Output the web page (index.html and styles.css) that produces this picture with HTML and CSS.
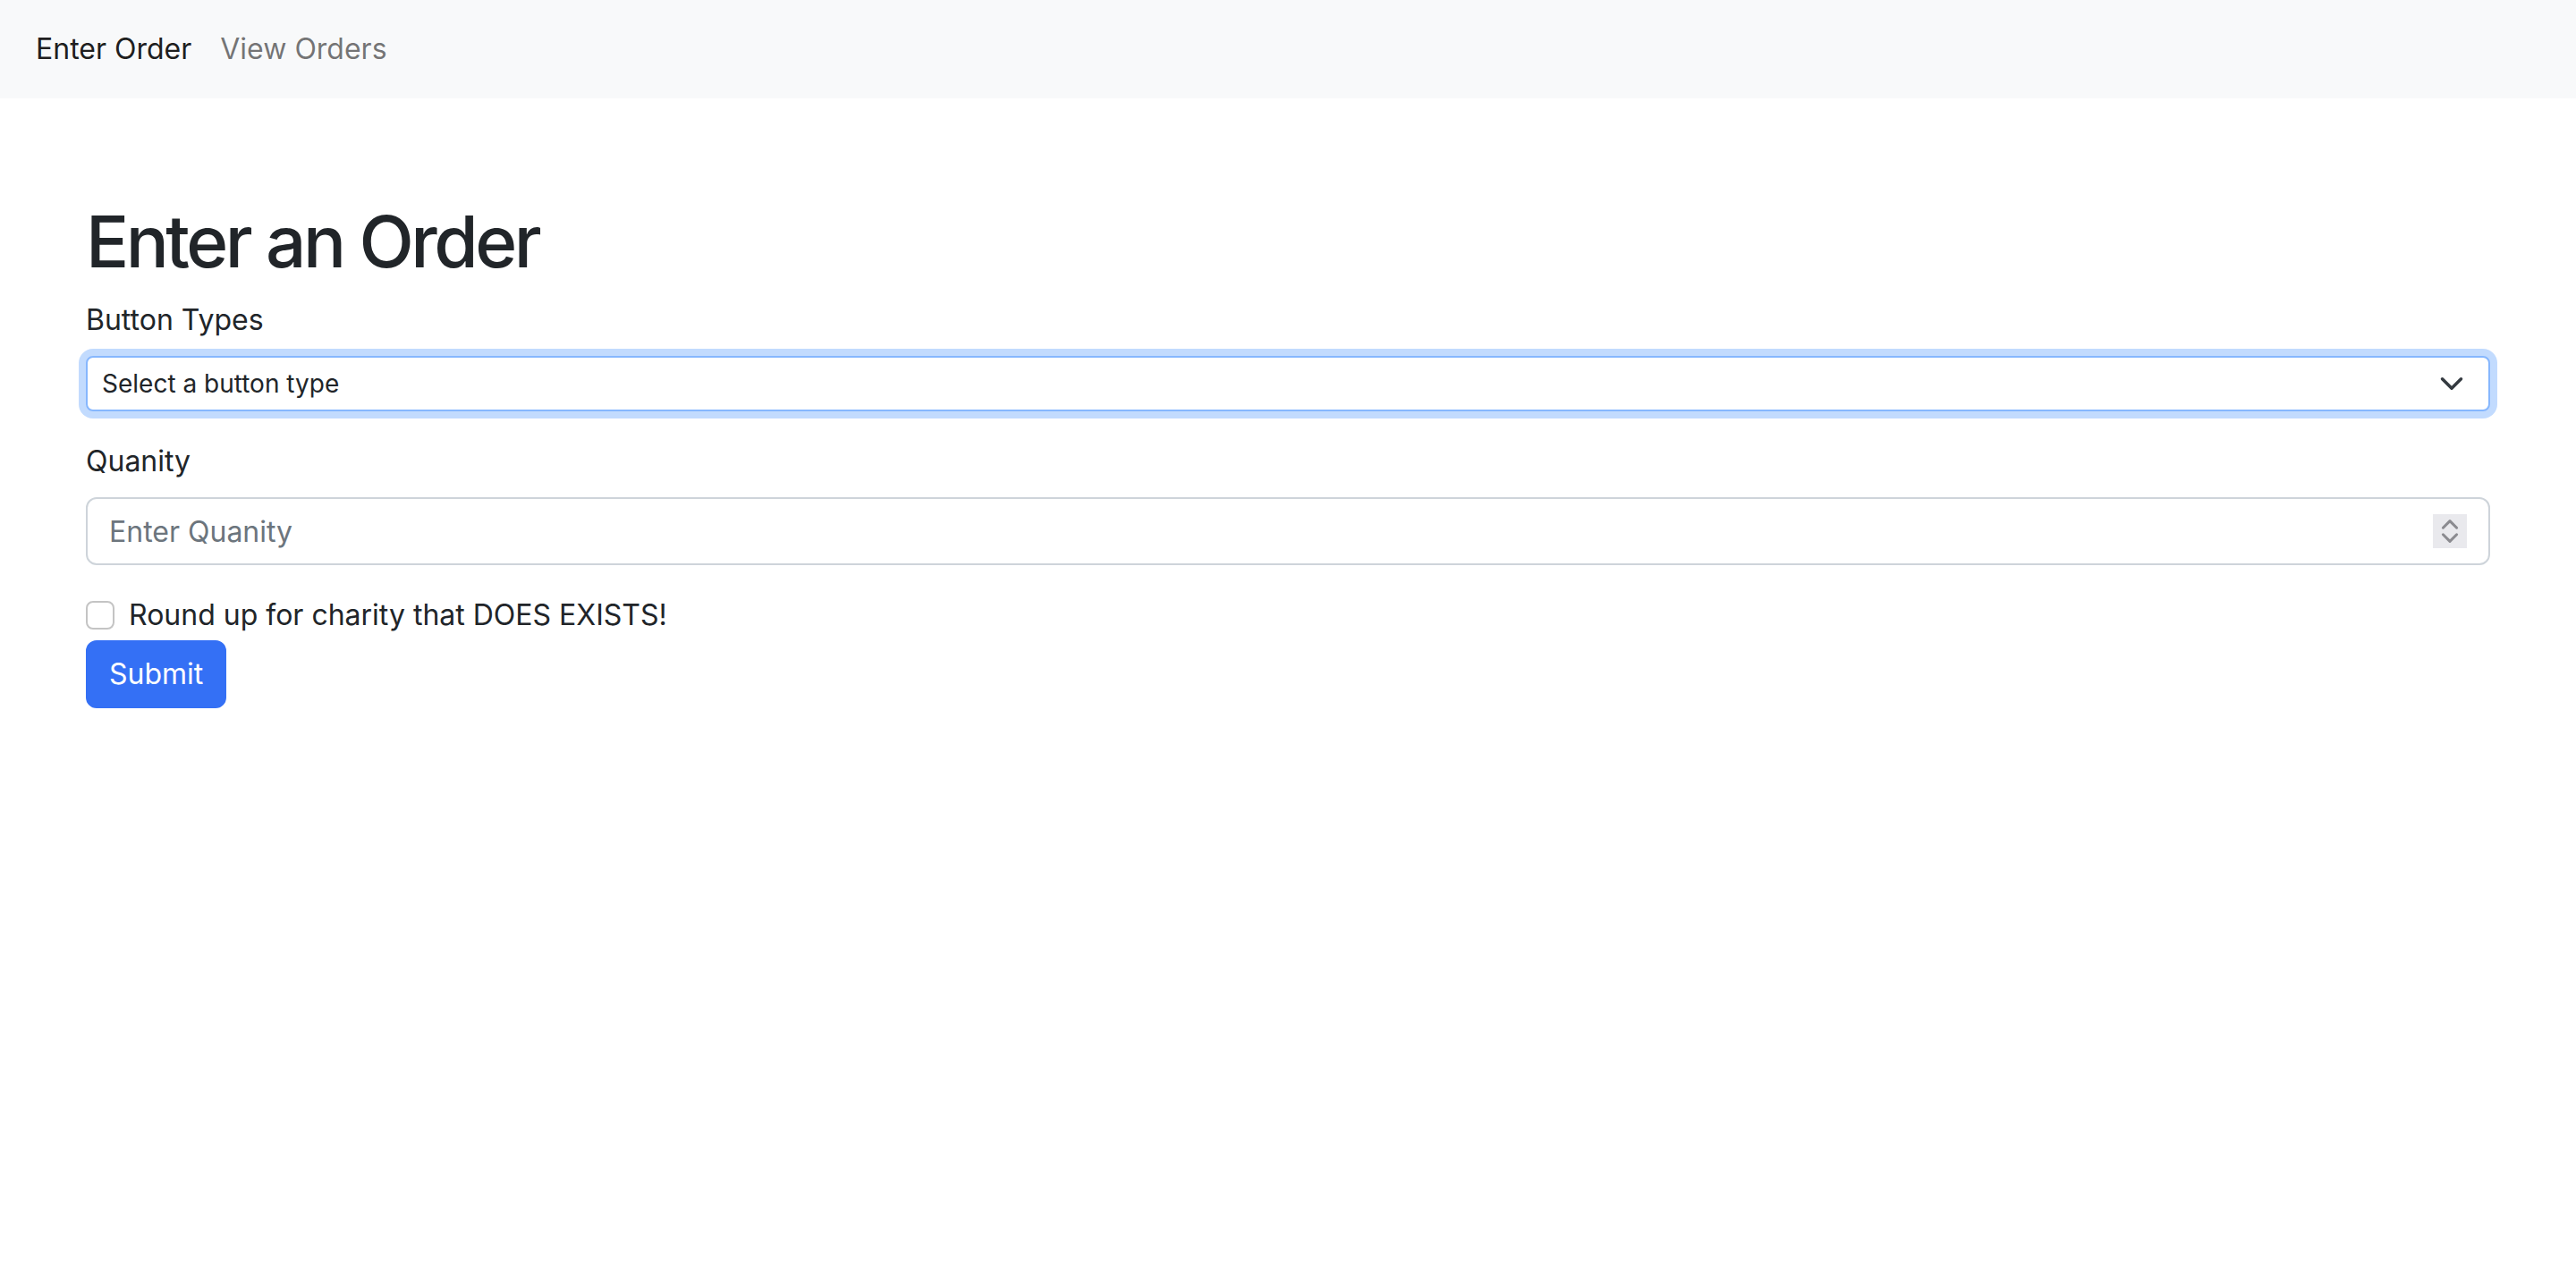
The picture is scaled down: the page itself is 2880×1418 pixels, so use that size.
FILE: index.html
```html
<!DOCTYPE html>
<html lang="en">
<head>
<meta charset="utf-8">
<title>Enter an Order</title>
<link rel="stylesheet" href="styles.css">
</head>
<body>
<nav class="navbar">
  <a class="nav-link active" href="#">Enter Order</a>
  <a class="nav-link" href="#">View Orders</a>
</nav>
<main class="page">
  <h1 class="title">Enter an Order</h1>
  <form class="order-form">
    <div class="field">
      <label class="form-label" for="buttonType">Button Types</label>
      <div class="select-wrap">
        <select id="buttonType" class="form-select">
          <option>Select a button type</option>
        </select>
        <svg class="chevron" viewBox="0 0 16 16" width="28" height="28" aria-hidden="true">
          <path d="M2 5l6 6 6-6" fill="none" stroke="#343a40" stroke-width="2" stroke-linecap="round" stroke-linejoin="round"/>
        </svg>
      </div>
    </div>
    <div class="field">
      <label class="form-label" for="qty">Quanity</label>
      <div class="input-wrap">
        <input id="qty" class="form-control" type="text" placeholder="Enter Quanity">
        <span class="spinner" aria-hidden="true">
          <svg viewBox="0 0 20 20" width="38" height="38">
            <path d="M6 8l4-4 4 4" fill="none" stroke="#8b8b90" stroke-width="1.6" stroke-linecap="round" stroke-linejoin="round"/>
            <path d="M6 12l4 4 4-4" fill="none" stroke="#8b8b90" stroke-width="1.6" stroke-linecap="round" stroke-linejoin="round"/>
          </svg>
        </span>
      </div>
    </div>
    <div class="form-check">
      <input id="charity" class="check-input" type="checkbox">
      <label class="check-label" for="charity">Round up for charity that DOES EXISTS!</label>
    </div>
    <button type="submit" class="btn-primary">Submit</button>
  </form>
</main>
</body>
</html>
```
FILE: styles.css
```css
* { box-sizing: border-box; }
html, body { margin: 0; padding: 0; }
body {
  font-family: Inter, "Noto Sans", "Liberation Sans", sans-serif;
  font-size: 32px;
  line-height: 48px;
  color: #212529;
  background: #fff;
}
.navbar {
  display: flex;
  align-items: center;
  height: 110px;
  padding: 0 24px;
  background: #f8f9fa;
}
.nav-link {
  padding: 16px;
  color: rgba(0, 0, 0, 0.55);
  text-decoration: none;
  font-size: 32px;
  line-height: 48px;
}
.nav-link.active { color: rgba(0, 0, 0, 0.9); }
.page {
  padding: 112px 96px 0;
}
.title {
  margin: 0 0 16px;
  font-size: 80px;
  line-height: 96px;
  font-weight: 500;
  letter-spacing: -3.5px;
}
.order-form { display: flex; flex-direction: column; align-items: stretch; }
.field { margin-bottom: 32px; }
.form-label { display: block; margin-bottom: 16px; }
.select-wrap, .input-wrap { position: relative; }
.form-select {
  display: block;
  width: 100%;
  height: 62px;
  padding: 0 96px 0 16px;
  font: inherit;
  font-size: 28px;
  color: #212529;
  background: #fff;
  border: 2px solid #86b7fe;
  border-radius: 8px;
  box-shadow: 0 0 0 8px rgba(13, 110, 253, 0.25);
  appearance: none;
  -webkit-appearance: none;
  outline: none;
}
.chevron {
  position: absolute;
  right: 29px;
  top: 17px;
  pointer-events: none;
}
.form-control {
  display: block;
  width: 100%;
  height: 76px;
  padding: 12px 24px;
  font: inherit;
  color: #212529;
  background: #fff;
  border: 2px solid #ced4da;
  border-radius: 12px;
  outline: none;
}
.form-control::placeholder { color: #6c757d; }
.spinner {
  position: absolute;
  right: 26px;
  top: 19px;
  width: 38px;
  height: 38px;
  background: #e9e9ed;
  display: flex;
}
.form-check {
  display: flex;
  align-items: flex-start;
  gap: 16px;
  min-height: 48px;
  margin-bottom: 4px;
}
.check-input {
  flex: none;
  width: 32px;
  height: 32px;
  margin: 8px 0 0;
  border: 2px solid #c4c4c4;
  border-radius: 8px;
  background: #fff;
  appearance: none;
  -webkit-appearance: none;
}
.btn-primary {
  align-self: flex-start;
  padding: 12px 24px;
  font: inherit;
  color: #fff;
  background: #3470f5;
  border: 2px solid #3470f5;
  border-radius: 12px;
  cursor: pointer;
}
```
